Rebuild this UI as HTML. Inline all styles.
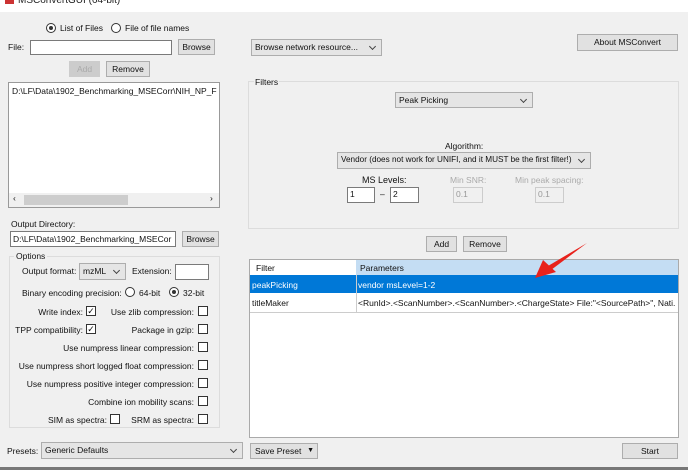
<!DOCTYPE html>
<html><head><style>
*{box-sizing:border-box;margin:0;padding:0}
body{width:688px;height:470px;background:#f0f0f0;font-family:"Liberation Sans",sans-serif;font-size:8.5px;color:#111;position:relative;overflow:hidden}
.a{position:absolute;white-space:nowrap}
.btn{position:absolute;background:#e1e1e1;border:1px solid #adadad;text-align:center;line-height:14px}
.in{position:absolute;background:#fff;border:1px solid #7a7a7a}
.sel{position:absolute;background:#e5e5e5;border:1px solid #adadad;padding-left:3px;line-height:14px;overflow:hidden}
.sel:after{content:"";position:absolute;right:6px;top:4px;width:4px;height:4px;border-right:1px solid #444;border-bottom:1px solid #444;transform:rotate(45deg)}
.cb{position:absolute;width:10px;height:10px;border:1px solid #333;background:#fff;font-size:9px;line-height:8px;text-align:center}
.rd{position:absolute;width:10px;height:10px;border:1px solid #333;border-radius:50%;background:#fff}
.rd.on:after{content:"";position:absolute;left:2px;top:2px;width:4px;height:4px;border-radius:50%;background:#333}
.grp{position:absolute;border:1px solid #dcdcdc}
.r{text-align:right}
</style></head><body>
<div class="a" style="left:0;top:0;width:688px;height:12px;background:#fff"></div>
<div class="a" style="left:5px;top:-3px;width:9px;height:7px;background:#c33"></div>
<div class="a" style="left:18px;top:-5px;font-size:10px;color:#222">MSConvertGUI (64-bit)</div>

<div class="rd on" style="left:46px;top:23px"></div><div class="a" style="left:60px;top:23px">List of Files</div>
<div class="rd" style="left:111px;top:23px"></div><div class="a" style="left:125px;top:23px">File of file names</div>
<div class="a" style="left:8px;top:42px">File:</div>
<div class="in" style="left:30px;top:40px;width:142px;height:15px"></div>
<div class="btn" style="left:178px;top:39px;width:37px;height:16px">Browse</div>
<div class="btn" style="left:69px;top:61px;width:31px;height:16px;color:#aaa;background:#ccc;border-color:#ccc">Add</div>
<div class="btn" style="left:106px;top:61px;width:44px;height:16px">Remove</div>
<div class="in" style="left:8px;top:82px;width:212px;height:126px;border-color:#999"></div>
<div class="a" style="left:12px;top:86px;width:206px;overflow:hidden">D:\LF\Data\1902_Benchmarking_MSECorr\NIH_NP_F</div>
<div class="a" style="left:9px;top:193px;width:210px;height:14px;background:#f0f0f0"></div>
<div class="a" style="left:24px;top:195px;width:104px;height:10px;background:#cdcdcd"></div>
<div class="a" style="left:13px;top:193px">‹</div><div class="a" style="left:210px;top:193px">›</div>
<div class="a" style="left:11px;top:219px">Output Directory:</div>
<div class="in" style="left:10px;top:231px;width:166px;height:16px;padding:2px 2px;overflow:hidden">D:\LF\Data\1902_Benchmarking_MSECor</div>
<div class="btn" style="left:182px;top:231px;width:37px;height:16px">Browse</div>

<div class="grp" style="left:9px;top:256px;width:211px;height:172px"></div>
<div class="a" style="left:14px;top:251px;background:#f0f0f0;padding:0 2px">Options</div>
<div class="a" style="left:22px;top:266px">Output format:</div>
<div class="sel" style="left:79px;top:263px;width:47px;height:17px">mzML</div>
<div class="a" style="left:132px;top:266px">Extension:</div>
<div class="in" style="left:175px;top:264px;width:34px;height:16px"></div>
<div class="a" style="left:22px;top:288px">Binary encoding precision:</div>
<div class="rd" style="left:125px;top:287px"></div><div class="a" style="left:139px;top:288px">64-bit</div>
<div class="rd on" style="left:169px;top:287px"></div><div class="a" style="left:183px;top:288px">32-bit</div>
<div class="a r" style="left:0;width:83px;top:307px">Write index:</div><div class="cb" style="left:86px;top:306px">✓</div>
<div class="a r" style="left:100px;width:94px;top:307px">Use zlib compression:</div><div class="cb" style="left:198px;top:306px"></div>
<div class="a r" style="left:0;width:83px;top:325px">TPP compatibility:</div><div class="cb" style="left:86px;top:324px">✓</div>
<div class="a r" style="left:100px;width:94px;top:325px">Package in gzip:</div><div class="cb" style="left:198px;top:324px"></div>
<div class="a r" style="left:0;width:194px;top:343px">Use numpress linear compression:</div><div class="cb" style="left:198px;top:342px"></div>
<div class="a r" style="left:0;width:194px;top:361px">Use numpress short logged float compression:</div><div class="cb" style="left:198px;top:360px"></div>
<div class="a r" style="left:0;width:194px;top:379px">Use numpress positive integer compression:</div><div class="cb" style="left:198px;top:378px"></div>
<div class="a r" style="left:0;width:194px;top:397px">Combine ion mobility scans:</div><div class="cb" style="left:198px;top:396px"></div>
<div class="a r" style="left:0;width:107px;top:415px">SIM as spectra:</div><div class="cb" style="left:110px;top:414px"></div>
<div class="a r" style="left:120px;width:74px;top:415px">SRM as spectra:</div><div class="cb" style="left:198px;top:414px"></div>
<div class="a" style="left:7px;top:446px">Presets:</div>
<div class="sel" style="left:41px;top:442px;width:202px;height:17px">Generic Defaults</div>
<div class="a" style="left:0;top:467px;width:688px;height:3px;background:#777"></div>

<div class="sel" style="left:251px;top:39px;width:131px;height:17px">Browse network resource...</div>
<div class="btn" style="left:577px;top:34px;width:101px;height:17px">About MSConvert</div>
<div class="grp" style="left:248px;top:81px;width:431px;height:148px"></div>
<div class="a" style="left:254px;top:77px;background:#f0f0f0;padding:0 1px">Filters</div>
<div class="sel" style="left:395px;top:92px;width:138px;height:16px">Peak Picking</div>
<div class="a" style="left:445px;top:141px">Algorithm:</div>
<div class="sel" style="left:337px;top:152px;width:254px;height:17px;font-size:8.2px;padding-right:14px">Vendor (does not work for UNIFI, and it MUST be the first filter!)</div>
<div class="a" style="left:362px;top:175px;font-size:9px">MS Levels:</div>
<div class="in" style="left:347px;top:187px;width:28px;height:16px;padding:1px 2px">1</div>
<div class="a" style="left:380px;top:189px">–</div>
<div class="in" style="left:390px;top:187px;width:29px;height:16px;padding:1px 2px">2</div>
<div class="a" style="left:450px;top:175px;color:#aaa">Min SNR:</div>
<div class="in" style="left:453px;top:187px;width:30px;height:16px;padding:1px 2px;background:#f0f0f0;border-color:#ccc;color:#999">0.1</div>
<div class="a" style="left:515px;top:175px;color:#aaa">Min peak spacing:</div>
<div class="in" style="left:535px;top:187px;width:29px;height:16px;padding:1px 2px;background:#f0f0f0;border-color:#ccc;color:#999">0.1</div>
<div class="btn" style="left:426px;top:236px;width:31px;height:16px">Add</div>
<div class="btn" style="left:463px;top:236px;width:44px;height:16px">Remove</div>

<div class="in" style="left:249px;top:259px;width:430px;height:179px;border-color:#aaa"></div>
<div class="a" style="left:250px;top:260px;width:106px;height:15px;background:#fff;padding:3px 6px">Filter</div>
<div class="a" style="left:356px;top:260px;width:322px;height:15px;background:#c4ddf3;padding:3px 4px">Parameters</div>
<div class="a" style="left:250px;top:275px;width:428px;height:18px;background:#0078d7;color:#fff"></div>
<div class="a" style="left:252px;top:280px;color:#fff">peakPicking</div>
<div class="a" style="left:358px;top:280px;color:#fff">vendor msLevel=1-2</div>
<div class="a" style="left:356px;top:275px;width:1px;height:37px;background:#ccc"></div>
<div class="a" style="left:250px;top:312px;width:428px;height:1px;background:#ccc"></div>
<div class="a" style="left:252px;top:298px">titleMaker</div>
<div class="a" style="left:358px;top:298px;width:318px;overflow:hidden">&lt;RunId&gt;.&lt;ScanNumber&gt;.&lt;ScanNumber&gt;.&lt;ChargeState&gt; File:"&lt;SourcePath&gt;", Nati...</div>
<div class="btn" style="left:250px;top:443px;width:68px;height:16px;text-align:left;padding-left:4px">Save Preset <span style="position:absolute;right:3px;font-size:7px">▼</span></div>
<div class="btn" style="left:622px;top:443px;width:56px;height:16px">Start</div>

<svg class="a" style="left:0;top:0" width="688" height="470"><path d="M587,243 L548,266 L551,270 Z" fill="#e8221c"/><path d="M535,278 L543,260 L556,272 Z" fill="#e8221c"/></svg>
</body></html>
